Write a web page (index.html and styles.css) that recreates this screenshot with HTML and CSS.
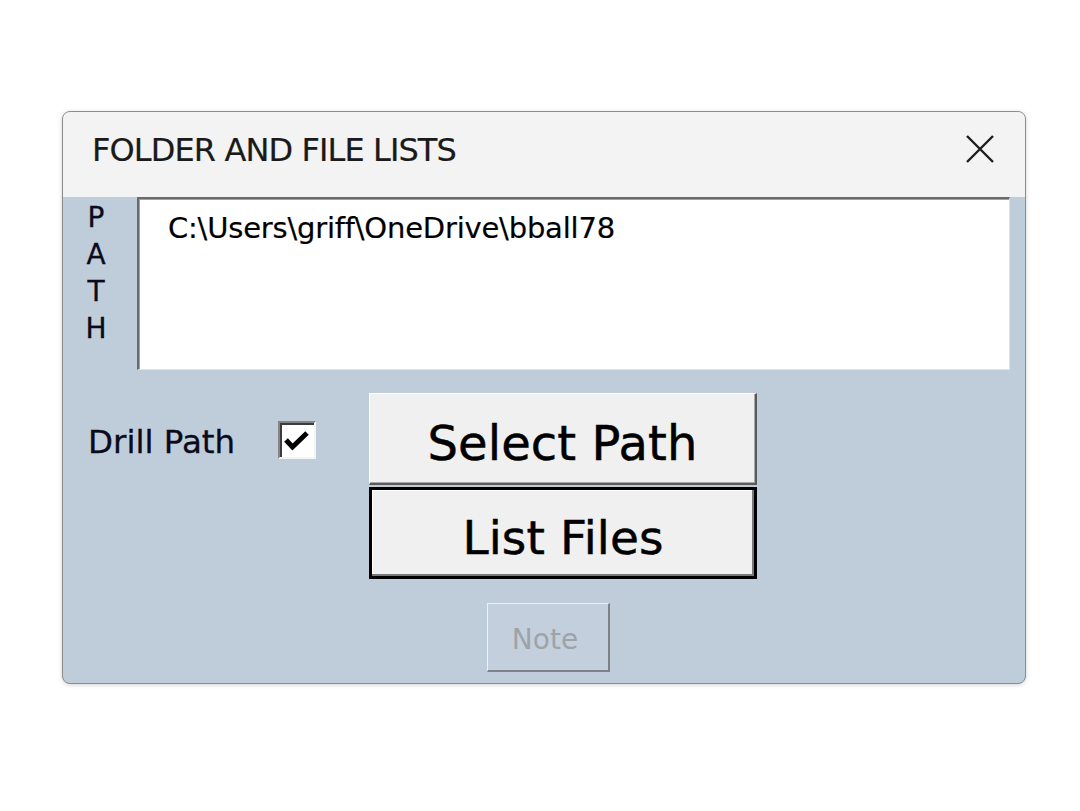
FILE: index.html
```html
<!DOCTYPE html>
<html lang="en">
<head>
<meta charset="utf-8">
<title>Folder and File Lists</title>
<link rel="stylesheet" href="styles.css">
</head>
<body>
<div class="window">
  <div class="titlebar">
    <span class="title">FOLDER AND FILE LISTS</span>
    <svg class="close" width="28" height="28" viewBox="0 0 28 28" aria-label="Close">
      <path d="M1 1 L27 27 M27 1 L1 27" stroke="#1c1c1c" stroke-width="2.4" fill="none"/>
    </svg>
  </div>
  <div class="content">
    <div class="path-row">
      <div class="path-label">P<br>A<br>T<br>H</div>
      <div class="path-box">C:\Users\griff\OneDrive\bball78</div>
    </div>
    <div class="controls">
      <span class="drill-label">Drill Path</span>
      <span class="check">
        <svg width="32" height="32" viewBox="0 0 32 32">
          <path d="M5 16 L11.5 23 L26 9" stroke="#000" stroke-width="5" fill="none" stroke-linejoin="miter" stroke-linecap="butt"/>
        </svg>
      </span>
      <div class="buttons">
        <button class="btn">Select Path</button>
        <button class="btn default">List Files</button>
      </div>
    </div>
    <div class="note-row">
      <button class="note" disabled>Note</button>
    </div>
  </div>
</div>
</body>
</html>
```

FILE: styles.css
```css
* { box-sizing: border-box; }

html, body {
  margin: 0;
  padding: 0;
  background: #ffffff;
}

body {
  font-family: "DejaVu Sans", "Liberation Sans", sans-serif;
  width: 1080px;
  height: 811px;
  overflow: hidden;
}

.window {
  margin: 111px 0 0 62px;
  width: 964px;
  height: 573px;
  border: 1px solid #8c8c8c;
  border-radius: 8px;
  overflow: hidden;
  background: #bfccda;
  box-shadow: 0 1px 4px rgba(0, 0, 0, 0.18);
  display: flex;
  flex-direction: column;
}

.titlebar {
  height: 85px;
  flex: none;
  background: #f3f3f3;
  display: flex;
  align-items: flex-start;
  justify-content: space-between;
  padding: 0 31px 0 29px;
}

.title {
  font-size: 32px;
  line-height: 1;
  letter-spacing: -0.9px;
  margin-top: 22px;
  color: #1a1a1a;
  -webkit-text-stroke: 0.2px #1a1a1a;
}

.close {
  margin-top: 23px;
}

.content {
  flex: 1;
  display: flex;
  flex-direction: column;
}

.path-row {
  display: flex;
  height: 173px;
}

.path-label {
  width: 74px;
  padding: 2px 8px 0 0;
  text-align: center;
  font-size: 28px;
  line-height: 37px;
  color: #0a0a1a;
  -webkit-text-stroke: 0.3px #0a0a1a;
}

.path-box {
  width: 873px;
  height: 173px;
  background: #ffffff;
  border-style: solid;
  border-width: 2px 1px 1px 2px;
  border-color: #6a6a6a #e3e3e3 #e3e3e3 #6a6a6a;
  box-shadow: inset 1px 1px 0 #a0a0a0;
  padding: 15px 0 0 29px;
  font-size: 29px;
  line-height: 1;
  color: #000;
  letter-spacing: -0.2px;
  -webkit-text-stroke: 0.2px #000;
}

.controls {
  display: flex;
  align-items: flex-start;
  margin-top: 23px;
  padding-left: 25px;
}

.drill-label {
  font-size: 32.5px;
  line-height: 1;
  margin-top: 33px;
  width: 190px;
  color: #0a0a1a;
  -webkit-text-stroke: 0.3px #0a0a1a;
}

.check {
  width: 38px;
  height: 38px;
  margin-top: 28px;
  background: #fff;
  border-style: solid;
  border-width: 2px;
  border-color: #858585 #f4f4f4 #f4f4f4 #858585;
  box-shadow: inset 2px 2px 0 #3c3c3c;
  display: flex;
  align-items: center;
  justify-content: center;
}

.buttons {
  margin-left: 53px;
  display: flex;
  flex-direction: column;
  gap: 2px;
}

.btn {
  width: 388px;
  height: 92px;
  margin: 0;
  background: #f0f0f0;
  border-style: solid;
  border-width: 1px 2px 2px 1px;
  border-color: #ffffff #5a5a5a #5a5a5a #ffffff;
  box-shadow: inset -1px -1px 0 #a8a8a8;
  font-family: "DejaVu Sans", "Liberation Sans", sans-serif;
  font-size: 48px;
  color: #000;
  padding: 8px 0 0 0;
  line-height: 1;
  letter-spacing: 0.1px;
  -webkit-text-stroke: 0.5px #000;
}

.btn.default {
  border: 3px solid #000;
  box-shadow: inset -2px -2px 0 #7a7a7a, inset 1px 1px 0 #ffffff;
  font-size: 47px;
}

.note-row {
  margin-top: 24px;
  padding-left: 424px;
}

.note {
  width: 123px;
  height: 69px;
  margin: 0;
  background: #c3cfdc;
  border-style: solid;
  border-width: 1px 2px 2px 1px;
  border-color: #eef1f4 #7e8286 #7e8286 #eef1f4;
  font-family: "DejaVu Sans", "Liberation Sans", sans-serif;
  font-size: 28px;
  line-height: 1;
  color: #9ea3a8;
  padding: 5px 6px 0 0;
}
```
